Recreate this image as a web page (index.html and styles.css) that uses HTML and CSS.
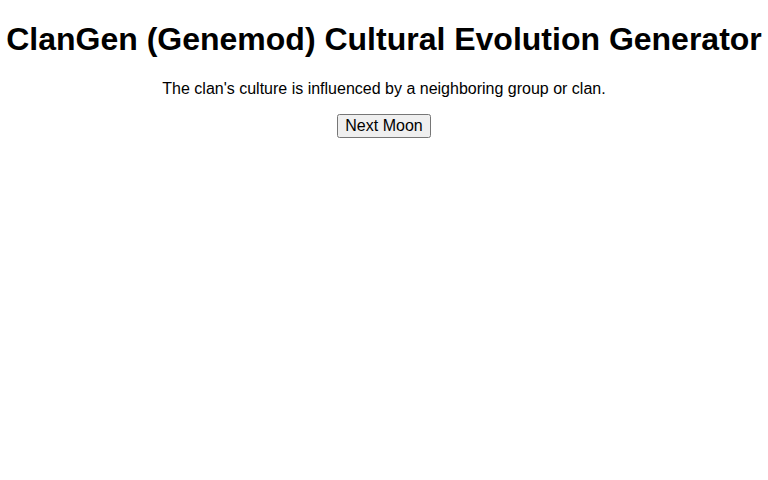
FILE: index.html
```html
<!DOCTYPE html>
<html lang="en">
<head>
    <meta charset="UTF-8">
    <meta name="viewport" content="width=device-width, initial-scale=1.0">
    <title>ClanGen (Genemod) Cultural Evolution Generator</title>
    <link rel="stylesheet" href="styles.css">
</head>
<body>
    <h1>ClanGen (Genemod) Cultural Evolution Generator</h1>
    <p id="event">The clan's culture is influenced by a neighboring group or clan.</p>
    <button onclick="nextMoon()">Next Moon</button>
    <script>
        const eventos = [
            "The clan's culture is influenced by a neighboring group or clan.",
            "A new tradition forms around the gathering at the full moon.",
            "The elders tell old stories, and the kits remember them.",
            "The clan begins to value hunting skill above all else."
        ];
        function nextMoon() {
            const i = Math.floor(Math.random() * eventos.length);
            document.getElementById("event").textContent = eventos[i];
        }
    </script>
</body>
</html>
```

FILE: styles.css
```css
body {
    font-family: "Liberation Sans", Arial, sans-serif;
    text-align: center;
    background-color: #fff;
    color: #000;
    margin: 0;
}
button {
    font-family: inherit;
    font-size: 16px;
}
```
